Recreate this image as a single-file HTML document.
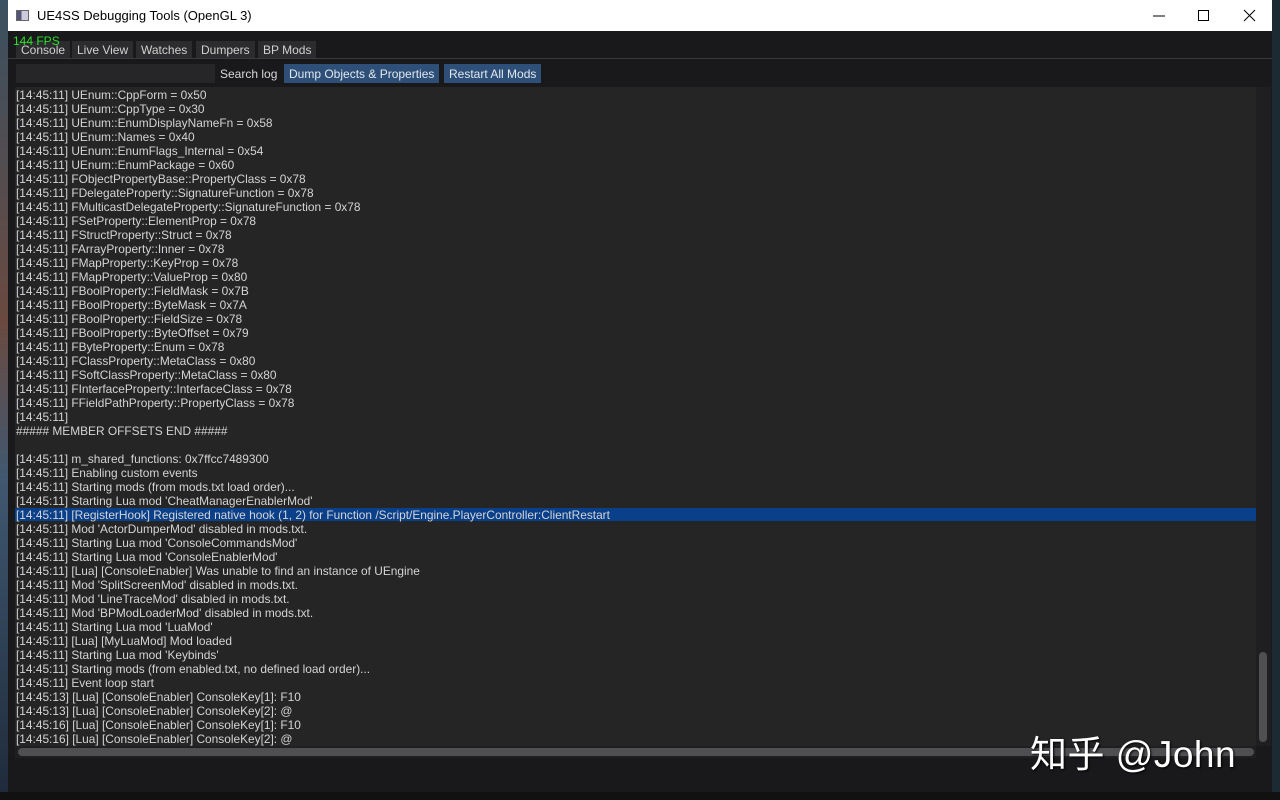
<!DOCTYPE html>
<html><head><meta charset="utf-8"><style>
*{margin:0;padding:0;box-sizing:border-box}
body{width:1280px;height:800px;background:#0d1014;position:relative;overflow:hidden;font-family:"Liberation Sans",sans-serif}
.bgl{position:absolute;left:0;top:0;width:8px;height:800px;background:linear-gradient(#3a5060,#6a4a40 40%,#405870 60%,#1e2a3a)}
.bgr{position:absolute;left:1272px;top:0;width:8px;height:800px;background:#1c2a33}
.bgb{position:absolute;left:0;top:792px;width:1280px;height:8px;background:#111}
.title{position:absolute;left:8px;top:0;width:1264px;height:31px;background:#fff;font-size:13px;color:#000}
.title .ic{position:absolute;left:8px;top:10px;width:13px;height:11px;border:1px solid #666;background:linear-gradient(90deg,#557 0 40%,#ccd 40%)}
.title .t{position:absolute;left:29px;top:8px}
.win{position:absolute;left:8px;top:31px;width:1264px;height:761px;background:#19191b}
.fps{position:absolute;left:13px;top:34px;color:#2be02b;font-size:12px}
.tab{position:absolute;top:41px;height:17px;background:#2c2c2e;color:#d0d0d0;font-size:12px;padding:2px 5px 0}
.tabline{position:absolute;left:8px;top:58px;width:1264px;height:1px;background:#3a3a3c}
.inp{position:absolute;left:16px;top:64px;width:199px;height:19px;background:#262628}
.lbl{position:absolute;left:220px;top:67px;color:#d8d8d8;font-size:12px}
.btn{position:absolute;top:64px;height:19px;background:#2e4f78;color:#e0e8f0;font-size:12px;padding:3px 5px 0}
.log{position:absolute;left:15px;top:87px;width:1241px;height:659px;background:#252526}
.lines{position:absolute;left:16px;top:88px;font-size:11.9px;line-height:14px;color:#d4d4d4;white-space:pre}
.sel{position:absolute;left:15px;top:508px;width:1241px;height:13px;background:#0a3f8a}
.hs{position:absolute;left:18px;top:748px;width:1236px;height:8px;border-radius:4px;background:#4f4f51}
.hst{position:absolute;left:15px;top:746px;width:1241px;height:12px;background:#1f1f21}
.vst{position:absolute;left:1256px;top:87px;width:15px;height:659px;background:#1f1f21}
.vs{position:absolute;left:1259px;top:652px;width:8px;height:90px;border-radius:4px;background:#505052}
.wm{position:absolute;left:1030px;top:724px;font-size:37px;letter-spacing:0.5px;color:#fff;font-family:"Liberation Sans","Noto Sans CJK SC",sans-serif;text-shadow:1px 1px 2px #000}
</style></head><body>
<div class="bgl"></div><div class="bgr"></div><div class="bgb"></div>
<div class="title"><div class="ic"></div><div class="t">UE4SS Debugging Tools (OpenGL 3)</div>
<svg style="position:absolute;left:1140px;top:8px" width="124" height="16"><line x1="5" y1="8" x2="17" y2="8" stroke="#000"/><rect x="50.5" y="2.5" width="10" height="10" fill="none" stroke="#000"/><path d="M96 2L107 13M107 2L96 13" stroke="#000"/></svg></div>
<div class="win"></div>
<div class="tab" style="left:16px">Console</div>
<div class="tab" style="left:72px">Live View</div>
<div class="tab" style="left:136px">Watches</div>
<div class="tab" style="left:196px">Dumpers</div>
<div class="tab" style="left:258px">BP Mods</div>
<div class="fps">144 FPS</div>
<div class="tabline"></div>
<div class="inp"></div><div class="lbl">Search log</div>
<div class="btn" style="left:284px">Dump Objects &amp; Properties</div>
<div class="btn" style="left:444px">Restart All Mods</div>
<div class="log"></div>
<div class="sel"></div>
<div class="lines">[14:45:11] UEnum::CppForm = 0x50
[14:45:11] UEnum::CppType = 0x30
[14:45:11] UEnum::EnumDisplayNameFn = 0x58
[14:45:11] UEnum::Names = 0x40
[14:45:11] UEnum::EnumFlags_Internal = 0x54
[14:45:11] UEnum::EnumPackage = 0x60
[14:45:11] FObjectPropertyBase::PropertyClass = 0x78
[14:45:11] FDelegateProperty::SignatureFunction = 0x78
[14:45:11] FMulticastDelegateProperty::SignatureFunction = 0x78
[14:45:11] FSetProperty::ElementProp = 0x78
[14:45:11] FStructProperty::Struct = 0x78
[14:45:11] FArrayProperty::Inner = 0x78
[14:45:11] FMapProperty::KeyProp = 0x78
[14:45:11] FMapProperty::ValueProp = 0x80
[14:45:11] FBoolProperty::FieldMask = 0x7B
[14:45:11] FBoolProperty::ByteMask = 0x7A
[14:45:11] FBoolProperty::FieldSize = 0x78
[14:45:11] FBoolProperty::ByteOffset = 0x79
[14:45:11] FByteProperty::Enum = 0x78
[14:45:11] FClassProperty::MetaClass = 0x80
[14:45:11] FSoftClassProperty::MetaClass = 0x80
[14:45:11] FInterfaceProperty::InterfaceClass = 0x78
[14:45:11] FFieldPathProperty::PropertyClass = 0x78
[14:45:11]
##### MEMBER OFFSETS END #####

[14:45:11] m_shared_functions: 0x7ffcc7489300
[14:45:11] Enabling custom events
[14:45:11] Starting mods (from mods.txt load order)...
[14:45:11] Starting Lua mod 'CheatManagerEnablerMod'
[14:45:11] [RegisterHook] Registered native hook (1, 2) for Function /Script/Engine.PlayerController:ClientRestart
[14:45:11] Mod 'ActorDumperMod' disabled in mods.txt.
[14:45:11] Starting Lua mod 'ConsoleCommandsMod'
[14:45:11] Starting Lua mod 'ConsoleEnablerMod'
[14:45:11] [Lua] [ConsoleEnabler] Was unable to find an instance of UEngine
[14:45:11] Mod 'SplitScreenMod' disabled in mods.txt.
[14:45:11] Mod 'LineTraceMod' disabled in mods.txt.
[14:45:11] Mod 'BPModLoaderMod' disabled in mods.txt.
[14:45:11] Starting Lua mod 'LuaMod'
[14:45:11] [Lua] [MyLuaMod] Mod loaded
[14:45:11] Starting Lua mod 'Keybinds'
[14:45:11] Starting mods (from enabled.txt, no defined load order)...
[14:45:11] Event loop start
[14:45:13] [Lua] [ConsoleEnabler] ConsoleKey[1]: F10
[14:45:13] [Lua] [ConsoleEnabler] ConsoleKey[2]: @
[14:45:16] [Lua] [ConsoleEnabler] ConsoleKey[1]: F10
[14:45:16] [Lua] [ConsoleEnabler] ConsoleKey[2]: @</div>
<div class="hst"></div><div class="hs"></div>
<div class="vst"></div><div class="vs"></div>
<div class="wm">知乎 @John</div>
</body></html>
